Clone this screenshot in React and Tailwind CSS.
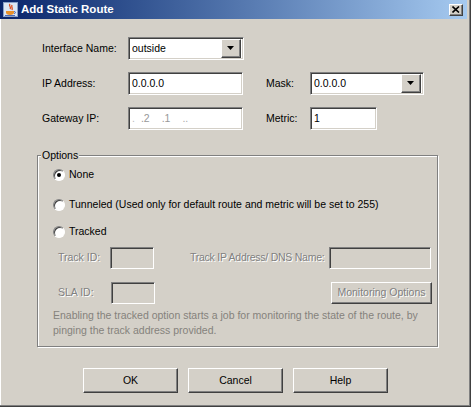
import React from 'react';

const sunken =
  'border border-t-[#808080] border-l-[#808080] border-r-white border-b-white shadow-[inset_1px_1px_0_#404040,inset_-1px_-1px_0_#d4d0c8]';
const raised =
  'border border-t-white border-l-white border-r-[#404040] border-b-[#404040] shadow-[inset_-1px_-1px_0_#808080]';
const dim = 'text-[#808080] [text-shadow:1px_1px_0_#fff]';

function JavaIcon() {
  return (
    <svg width="15" height="15" viewBox="0 0 15 15">
      <rect x="0.5" y="0.5" width="14" height="14" fill="#dce6f4" stroke="#8aa0c8" />
      <path d="M7 2 C5 4 9 5 7 7 M9 3 C8 5 10 6 9 8" stroke="#e04a1a" strokeWidth="1.3" fill="none" />
      <path d="M3 9 H11 V10.5 C11 12 9.5 13 7 13 C4.5 13 3 12 3 10.5 Z" fill="#e8902a" />
      <path d="M11 9.5 C13 9.5 13 11.5 11 11.5" stroke="#4a6ab8" strokeWidth="1" fill="none" />
      <rect x="2" y="13" width="10" height="1" fill="#4a6ab8" />
    </svg>
  );
}

function Arrow() {
  return (
    <svg width="8" height="5" viewBox="0 0 8 5">
      <path d="M0 0 H7 L3.5 4 Z" fill="#000" />
    </svg>
  );
}

function Select({ value, width }) {
  return (
    <div className={`${sunken} bg-white h-[23px] flex items-center pl-[2px] pr-[2px]`} style={{ width }}>
      <span className="flex-1 pl-[1px]">{value}</span>
      <div className={`${raised} bg-[#d4d0c8] w-[20px] h-[19px] flex items-center justify-center`}>
        <Arrow />
      </div>
    </div>
  );
}

function Input({ children, width, disabled, h = 23 }) {
  return (
    <div
      className={`${sunken} ${disabled ? 'bg-[#d4d0c8]' : 'bg-white'} flex items-center pl-[3px] shrink-0`}
      style={{ width, height: h }}
    >
      {children}
    </div>
  );
}

function Radio({ checked, label }) {
  return (
    <div className="flex items-center h-[14px]">
      <div className="w-[12px] h-[12px] rounded-full bg-white border border-t-[#808080] border-l-[#808080] border-r-white border-b-white shadow-[inset_1px_1px_0_#404040] flex items-center justify-center">
        {checked && <div className="w-[4px] h-[4px] rounded-full bg-black" />}
      </div>
      <span className="ml-[4px] whitespace-nowrap">{label}</span>
    </div>
  );
}

function Button({ children, width, h = 25, disabled }) {
  return (
    <div
      className={`${raised} bg-[#d4d0c8] flex items-center justify-center whitespace-nowrap ${disabled ? dim : ''}`}
      style={{ width, height: h }}
    >
      {children}
    </div>
  );
}

export default function App() {
  return (
    <div className="w-[474px] h-[412px] bg-white font-['Liberation_Sans',Arial,sans-serif] text-[10.5px] text-black">
      <div className="w-[471px] h-[407px] bg-[#d4d0c8] border-r border-b border-r-[#404040] border-b-[#404040] shadow-[inset_-1px_-1px_0_#808080,inset_1px_0_0_#fff] flex flex-col">
        {/* Title bar */}
        <div className="h-[19px] mr-[3px] bg-gradient-to-r from-[#0a246a] to-[#a6caf0] flex items-center pl-[3px] pr-[4px]">
          <JavaIcon />
          <span className="ml-[3px] text-white font-bold text-[11.5px]">Add Static Route</span>
          <div className={`${raised} ml-auto bg-[#d4d0c8] w-[14px] h-[12px] flex items-center justify-center`}>
            <svg width="8" height="7" viewBox="0 0 8 7">
              <path d="M0.5 0.5 L7 6.5 M7 0.5 L0.5 6.5" stroke="#000" strokeWidth="1.6" />
            </svg>
          </div>
        </div>

        {/* Content */}
        <div className="flex flex-col pl-[37px] pt-[18px]">
          <div className="flex items-center pl-[5px] h-[23px]">
            <span className="w-[86px]">Interface Name:</span>
            <Select value="outside" width={116} />
          </div>
          <div className="flex items-center pl-[5px] h-[23px] mt-[12px]">
            <span className="w-[86px]">IP Address:</span>
            <Input width={115}>0.0.0.0</Input>
            <span className="ml-[23px] w-[44px]">Mask:</span>
            <Select value="0.0.0.0" width={114} />
          </div>
          <div className="flex items-center pl-[5px] h-[23px] mt-[12px]">
            <span className="w-[86px]">Gateway IP:</span>
            <Input width={115}>
              <span className="text-[#bbb]">.</span>
              <span className="ml-[6px] text-[#999]">.2</span>
              <span className="ml-[12px] text-[#999]">.1</span>
              <span className="ml-[12px] text-[#aaa]">..</span>
            </Input>
            <span className="ml-[23px] w-[44px]">Metric:</span>
            <Input width={67}>1</Input>
          </div>

          {/* Options group */}
          <div className="relative mt-[25px] w-[401px] border border-[#808080] shadow-[inset_1px_1px_0_#fff,1px_1px_0_#fff] pl-[15px] pt-[12px] pb-[8px] flex flex-col">
            <span className="absolute -top-[7px] left-[3px] px-[1px] bg-[#d4d0c8] leading-[13px]">Options</span>
            <Radio checked label="None" />
            <div className="mt-[16px]">
              <Radio label="Tunneled (Used only for default route and metric will be set to 255)" />
            </div>
            <div className="mt-[13px]">
              <Radio label="Tracked" />
            </div>
            <div className="flex items-center mt-[8px] pl-[5px] h-[22px]">
              <span className={`w-[52px] shrink-0 whitespace-nowrap ${dim}`}>Track ID:</span>
              <Input width={44} h={22} disabled />
              <span className={`ml-[36px] w-[139px] shrink-0 whitespace-nowrap tracking-[-0.25px] ${dim}`}>Track IP Address/ DNS Name:</span>
              <Input width={102} h={22} disabled />
            </div>
            <div className="flex items-center mt-[13px] pl-[5px] h-[22px]">
              <span className={`w-[53px] shrink-0 whitespace-nowrap ${dim}`}>SLA ID:</span>
              <Input width={44} h={22} disabled />
              <div className="ml-[176px]">
                <Button width={101} h={22} disabled>Monitoring Options</Button>
              </div>
            </div>
            <p className="mt-[4px] leading-[15px] text-[#85827c]">
              Enabling the tracked option starts a job for monitoring the state of the route, by
              <br />
              pinging the track address provided.
            </p>
          </div>

          {/* Buttons */}
          <div className="flex gap-[10px] mt-[21px] pl-[46px]">
            <Button width={95}>OK</Button>
            <Button width={95}>Cancel</Button>
            <Button width={95}>Help</Button>
          </div>
        </div>
      </div>
    </div>
  );
}
